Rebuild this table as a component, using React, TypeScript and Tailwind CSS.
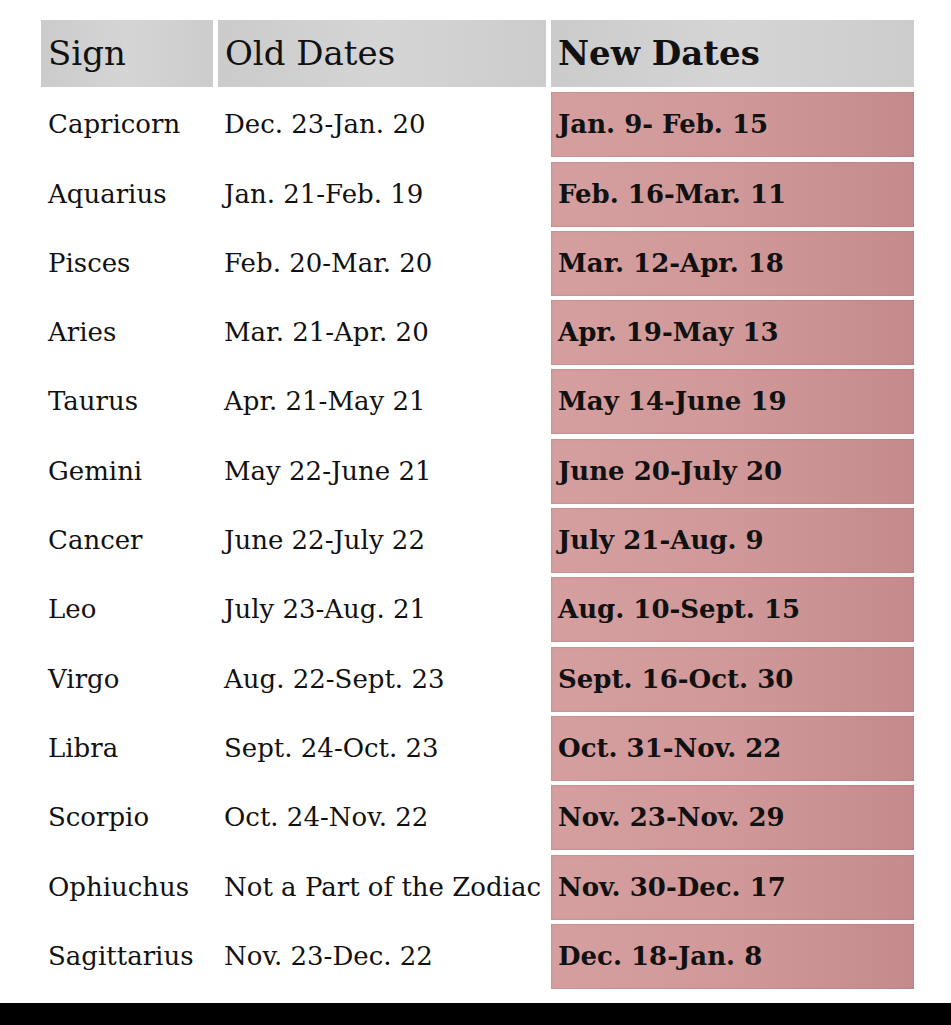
// App.tsx
// Zodiac sign dates table: old vs new dates

import React from 'react';

interface Row {
  sign: string;
  oldDates: string;
  newDates: string;
}

const rows: Row[] = [
  { sign: 'Capricorn', oldDates: 'Dec. 23-Jan. 20', newDates: 'Jan. 9- Feb. 15' },
  { sign: 'Aquarius', oldDates: 'Jan. 21-Feb. 19', newDates: 'Feb. 16-Mar. 11' },
  { sign: 'Pisces', oldDates: 'Feb. 20-Mar. 20', newDates: 'Mar. 12-Apr. 18' },
  { sign: 'Aries', oldDates: 'Mar. 21-Apr. 20', newDates: 'Apr. 19-May 13' },
  { sign: 'Taurus', oldDates: 'Apr. 21-May 21', newDates: 'May 14-June 19' },
  { sign: 'Gemini', oldDates: 'May 22-June 21', newDates: 'June 20-July 20' },
  { sign: 'Cancer', oldDates: 'June 22-July 22', newDates: 'July 21-Aug. 9' },
  { sign: 'Leo', oldDates: 'July 23-Aug. 21', newDates: 'Aug. 10-Sept. 15' },
  { sign: 'Virgo', oldDates: 'Aug. 22-Sept. 23', newDates: 'Sept. 16-Oct. 30' },
  { sign: 'Libra', oldDates: 'Sept. 24-Oct. 23', newDates: 'Oct. 31-Nov. 22' },
  { sign: 'Scorpio', oldDates: 'Oct. 24-Nov. 22', newDates: 'Nov. 23-Nov. 29' },
  { sign: 'Ophiuchus', oldDates: 'Not a Part of the Zodiac', newDates: 'Nov. 30-Dec. 17' },
  { sign: 'Sagittarius', oldDates: 'Nov. 23-Dec. 22', newDates: 'Dec. 18-Jan. 8' },
];

const headCell =
  'flex items-center h-[67px] px-[7px] text-[34px] bg-[linear-gradient(to_right,#cbcbcb,#d5d5d5_50%,#cccccc)]';

export default function App() {
  return (
    <div
      className="w-[951px] h-[1025px] bg-white flex flex-col text-[#111]"
      style={{ fontFamily: '"DejaVu Serif", Georgia, serif' }}
    >
      <div className="flex-1 pt-[20px] pl-[41px]">
        <div className="grid grid-cols-[172px_328px_363px] gap-x-[5px] gap-y-[4.3px]">
          {/* header */}
          <div className={headCell}>Sign</div>
          <div className={headCell}>Old Dates</div>
          <div className={`${headCell} font-bold mb-[1px]`}>New Dates</div>

          {rows.map((r) => (
            <React.Fragment key={r.sign}>
              <div className="flex items-center h-[65px] px-[7px] text-[26px] whitespace-nowrap">
                {r.sign}
              </div>
              <div className="flex items-center h-[65px] px-[6px] text-[26px] whitespace-nowrap">
                {r.oldDates}
              </div>
              <div className="flex items-center h-[65px] px-[7px] text-[26px] font-bold whitespace-nowrap bg-linear-to-r from-[#d59e9f] via-[#d09899] to-[#c58b8c] shadow-[inset_0_0_2px_rgba(150,90,90,0.5)]">
                {r.newDates}
              </div>
            </React.Fragment>
          ))}
        </div>
      </div>
      <div className="h-[22px] bg-black" />
    </div>
  );
}
